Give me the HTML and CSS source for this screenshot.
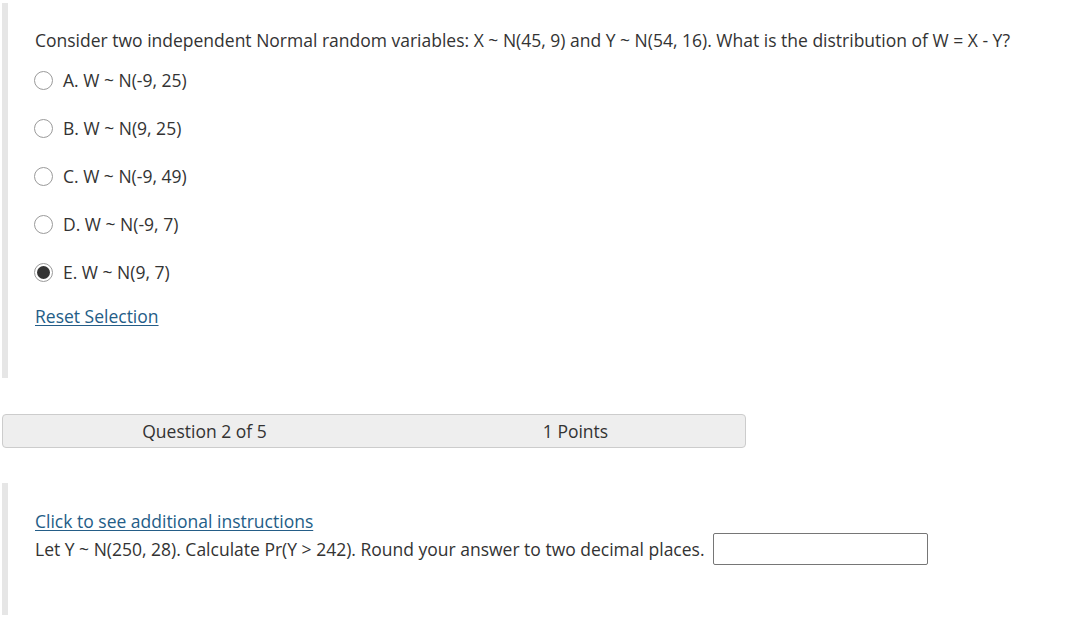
FILE: index.html
```html
<!DOCTYPE html>
<html>
<head>
<meta charset="utf-8">
<link rel="stylesheet" href="styles.css">
</head>
<body>
<div class="page">
  <section class="qblock q1">
    <p class="prompt">Consider two independent Normal random variables: X ~ N(45, 9) and Y ~ N(54, 16). What is the distribution of W = X - Y?</p>
    <ul class="options">
      <li class="option"><span class="radio"></span><span class="label">A. W ~ N(-9, 25)</span></li>
      <li class="option"><span class="radio"></span><span class="label">B. W ~ N(9, 25)</span></li>
      <li class="option"><span class="radio"></span><span class="label">C. W ~ N(-9, 49)</span></li>
      <li class="option"><span class="radio"></span><span class="label">D. W ~ N(-9, 7)</span></li>
      <li class="option"><span class="radio checked"></span><span class="label">E. W ~ N(9, 7)</span></li>
    </ul>
    <a class="link reset" href="#">Reset Selection</a>
  </section>

  <div class="qheader">
    <span class="qnum">Question 2 of 5</span>
    <span class="qpts">1 Points</span>
  </div>

  <section class="qblock q2">
    <a class="link" href="#">Click to see additional instructions</a>
    <div class="answer-row">
      <span class="prompt2">Let Y ~ N(250, 28). Calculate Pr(Y &gt; 242). Round your answer to two decimal places.</span>
      <input class="answer" type="text">
    </div>
  </section>
</div>
</body>
</html>
```
FILE: styles.css
```css
html, body {
  margin: 0;
  padding: 0;
  background: #fff;
}
body {
  font-family: "Open Sans", "Liberation Sans", sans-serif;
  font-size: 17.5px;
  color: #333;
}
.page {
  padding-left: 2px;
  padding-top: 3px;
}
.qblock {
  border-left: 6px solid #e6e6e6;
  padding-left: 27px;
  box-sizing: border-box;
}
.q1 {
  height: 375px;
  padding-top: 25px;
}
.prompt {
  margin: 0;
  line-height: 24px;
}
.options {
  list-style: none;
  margin: 16px 0 0 0;
  padding: 0;
  display: flex;
  flex-direction: column;
  gap: 24px;
}
.option {
  display: flex;
  align-items: center;
  height: 24px;
}
.radio {
  width: 19px;
  height: 19px;
  border: 1px solid #9a9a9a;
  border-radius: 50%;
  box-sizing: border-box;
  margin-left: -1px;
  margin-right: 10px;
  display: flex;
  align-items: center;
  justify-content: center;
  background: #fff;
  flex: none;
}
.radio.checked::after {
  content: "";
  width: 13px;
  height: 13px;
  border-radius: 50%;
  background: #333;
}
.label {
  line-height: 24px;
}
.link {
  color: #245d87;
  text-decoration: underline;
  text-underline-offset: 2px;
  line-height: 24px;
  display: inline-block;
}
.reset {
  margin-top: 20px;
}
.qheader {
  margin-top: 36px;
  width: 744px;
  height: 34px;
  box-sizing: border-box;
  background: #eee;
  border: 1px solid #ccc;
  border-radius: 4px;
  display: grid;
  grid-template-columns: 371px 371px;
  padding-left: 16px;
  padding-bottom: 1px;
  align-items: center;
  color: #333;
}
.qnum, .qpts {
  text-align: center;
  line-height: 30px;
}
.q2 {
  margin-top: 35px;
  height: 132px;
  padding-top: 26px;
}
.answer-row {
  display: flex;
  align-items: center;
  gap: 8px;
}
.prompt2 {
  line-height: 24px;
}
.answer {
  width: 215px;
  height: 32px;
  box-sizing: border-box;
  border: 1px solid #767676;
  border-radius: 2px;
  font: inherit;
  margin: 0;
}
```
